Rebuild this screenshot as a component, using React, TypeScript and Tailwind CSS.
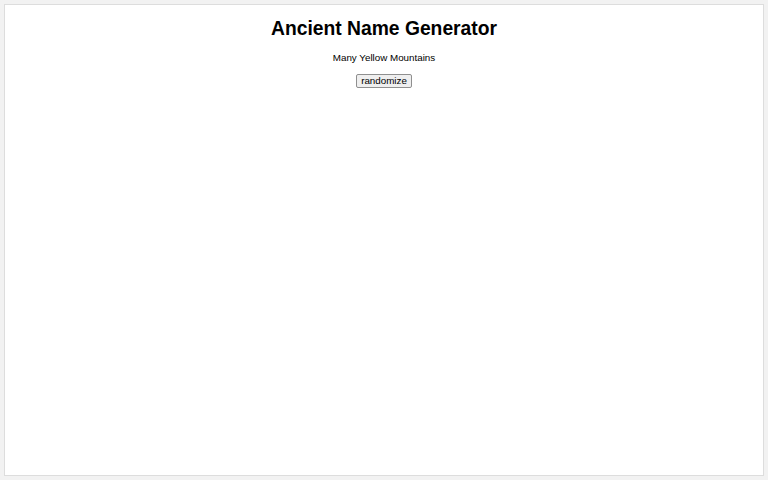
export default function App() {
  return (
    <div className="h-[480px] w-[768px] bg-[#f2f2f2] p-[4px] font-['Liberation_Sans',Arial,sans-serif]">
      <div className="flex h-[472px] flex-col items-center border border-[#dddddd] bg-white">
        <h1 className="mt-[12px] text-[19.3px] font-bold leading-[24px] text-black">Ancient Name Generator</h1>
        <p className="mt-[11px] text-[9.8px] leading-[12px] text-black">Many Yellow Mountains</p>
        <button className="mt-[10px] h-[14px] rounded-[2px] border border-[#8f8f8f] bg-[#efefef] px-[4px] text-[9.8px] leading-[12px] text-black">
          randomize
        </button>
      </div>
    </div>
  );
}
